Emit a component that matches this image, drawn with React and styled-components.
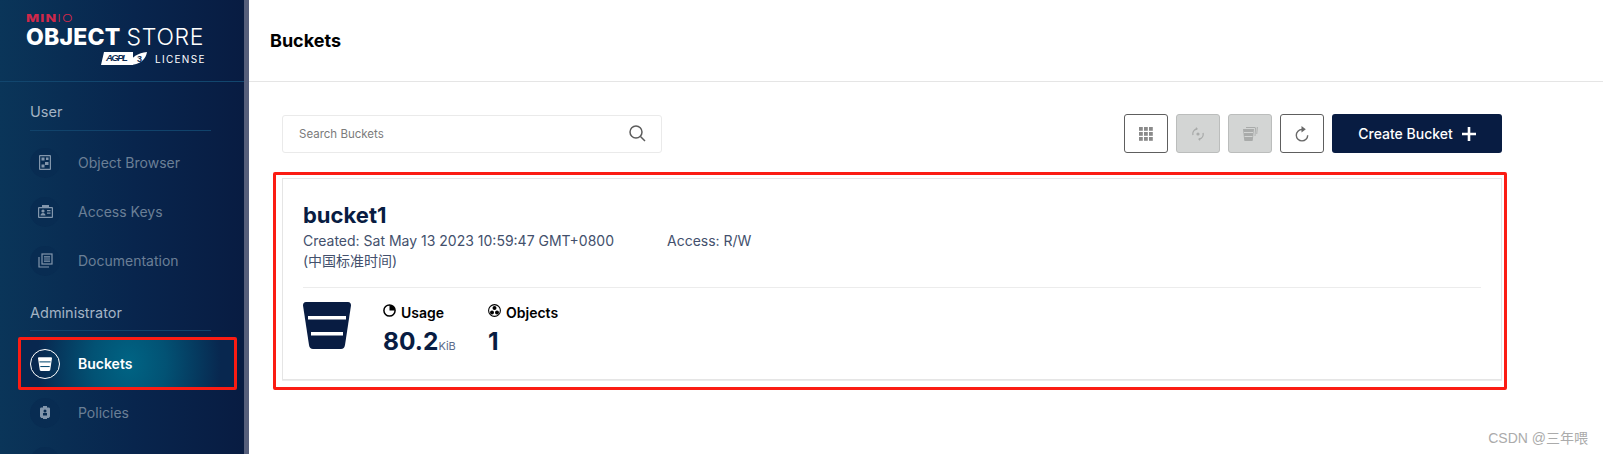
import React from 'react'
import styled, { createGlobalStyle } from 'styled-components'

const GlobalStyle = createGlobalStyle`
    html, body {
        margin: 0;
        padding: 0;
        background: #fff;
        font-family: Inter, "Noto Sans CJK SC", sans-serif;
    }
    * {
        box-sizing: border-box;
    }
`

const Page = styled.div`
    display: flex;
    width: 1603px;
    height: 454px;
    overflow: hidden;
    position: relative;
`

const Sidebar = styled.aside`
    width: 244px;
    flex: none;
    background: linear-gradient(90deg, #0a3559 0%, #08254d 55%, #081c42 100%);
    overflow: hidden;
`

const Handle = styled.div`
    width: 5px;
    flex: none;
    background: #565f7b;
`

const LogoBlock = styled.div`
    height: 82px;
    border-bottom: 1px solid #12466e;
    padding: 13px 0 0 26px;
`

const MinioMark = styled.div`
    font-size: 10px;
    line-height: 11px;
    font-weight: 800;
    letter-spacing: 0.8px;
    color: #d0284a;
    transform: scaleX(1.4);
    transform-origin: left;
    span {
        font-weight: 300;
    }
`

const ProductName = styled.div`
    font-size: 23px;
    line-height: 26px;
    font-weight: 800;
    color: #fff;
    white-space: nowrap;
    letter-spacing: 0.2px;
    span {
        font-weight: 300;
        margin-left: 6px;
        letter-spacing: 0.7px;
    }
`

const LicenseRow = styled.div`
    display: flex;
    align-items: center;
    gap: 8px;
    margin: 1px 0 0 75px;
    color: #fff;
    font-size: 10px;
    letter-spacing: 1.3px;
`

const NavSection = styled.nav`
    padding: 0 0 0 30px;
`

const SectionTitle = styled.div`
    width: 181px;
    height: ${(p) => p.$height}px;
    padding-top: ${(p) => p.$top}px;
    margin-bottom: ${(p) => p.$gap}px;
    border-bottom: 1px solid #11436b;
    color: #a3b3c4;
    font-size: 14.5px;
    line-height: 18px;
`

const NavItem = styled.div`
    display: flex;
    align-items: center;
    gap: 18px;
    height: 49px;
    color: ${(p) => (p.$active ? '#fff' : '#6b7f96')};
    font-size: 14px;
    font-weight: ${(p) => (p.$active ? 600 : 400)};
    position: relative;
    ${(p) =>
        p.$active &&
        `
        &::before {
            content: '';
            position: absolute;
            left: -9px;
            right: 10px;
            top: 1px;
            bottom: 1px;
            background: radial-gradient(ellipse 92px 120px at 108px 50%, #006484 0%, #025274 40%, #08274f 100%);
        }
        &::after {
            content: '';
            position: absolute;
            left: -12px;
            right: 7px;
            top: -2px;
            bottom: -2px;
            border: 3px solid #fb1c13;
            border-radius: 2px;
        }
    `}
`

const NavIcon = styled.span`
    width: 30px;
    height: 30px;
    flex: none;
    border-radius: 50%;
    display: flex;
    align-items: center;
    justify-content: center;
    position: relative;
    z-index: 1;
    background: ${(p) => (p.$active ? 'transparent' : '#082c52')};
    border: ${(p) => (p.$active ? '1px solid #fff' : 'none')};
    color: ${(p) => (p.$active ? '#fff' : '#8296ac')};
`

const ActiveGlyph = styled.span`
    --gap: #04486f;
    display: flex;
`

const NavLabel = styled.span`
    position: relative;
    z-index: 1;
`

const Main = styled.main`
    flex: 1;
    min-width: 0;
    background: #fff;
`

const Header = styled.header`
    height: 82px;
    border-bottom: 1px solid #e5e5e5;
    padding: 0 0 0 21px;
    display: flex;
    align-items: center;
`

const Title = styled.h1`
    margin: 0;
    font-size: 18px;
    line-height: 20px;
    font-weight: 700;
    color: #000;
`

const Toolbar = styled.div`
    display: flex;
    align-items: center;
    justify-content: space-between;
    padding: 32px 101px 0 33px;
`

const SearchBox = styled.div`
    width: 380px;
    height: 38px;
    border: 1px solid #eaeaea;
    border-radius: 3px;
    display: flex;
    align-items: center;
    justify-content: space-between;
    padding: 0 15px 0 16px;
    font-size: 11.5px;
    color: #7b7b7b;
`

const Actions = styled.div`
    display: flex;
    gap: 8px;
`

const IconButton = styled.button`
    width: 44px;
    height: 39px;
    padding: 0;
    display: flex;
    align-items: center;
    justify-content: center;
    border-radius: 3px;
    background: ${(p) => (p.disabled ? '#d3d5d4' : '#fff')};
    border: 1px solid ${(p) => (p.disabled ? '#bbbdbc' : '#5e5e5e')};
    color: ${(p) => (p.disabled ? '#a9abaa' : '#696969')};
`

const CreateButton = styled.button`
    width: 170px;
    height: 39px;
    display: flex;
    align-items: center;
    justify-content: center;
    gap: 9px;
    border: none;
    border-radius: 3px;
    background: #081c42;
    color: #fff;
    font-family: Inter, sans-serif;
    font-size: 14px;
    font-weight: 500;
`

const Card = styled.section`
    position: relative;
    margin: 25px 101px 0 33px;
    height: 202px;
    border: 1px solid #e5e5e5;
    box-shadow: 0 1px 0 #ececec;
    padding: 23px 20px 0 20px;
    &::after {
        content: '';
        position: absolute;
        left: -10px;
        right: -6px;
        top: -7px;
        bottom: -11px;
        border: 3px solid #fb1c13;
        border-radius: 2px;
        pointer-events: none;
    }
`

const BucketName = styled.h2`
    margin: 0;
    font-size: 22px;
    line-height: 26px;
    font-weight: 700;
    color: #081c42;
`

const MetaRow = styled.div`
    display: flex;
    margin-top: 3px;
    color: #43506c;
    font-size: 14px;
    line-height: 20px;
    height: 56px;
`

const Created = styled.div`
    width: 364px;
    flex: none;
    padding-right: 30px;
`

const Divider = styled.div`
    height: 1px;
    background: #ececec;
    width: 1178px;
`

const StatsRow = styled.div`
    display: flex;
    align-items: flex-start;
    padding-top: 15px;
`

const BigBucket = styled.div`
    width: 80px;
    flex: none;
    display: flex;
    margin-top: -2px;
    color: #081c42;
`

const Stat = styled.div`
    width: ${(p) => p.$width}px;
    flex: none;
`

const StatLabel = styled.div`
    display: flex;
    align-items: center;
    gap: 5px;
    height: 18px;
    font-size: 14px;
    font-weight: 600;
    color: #000;
    svg {
        margin-top: -3px;
    }
`

const StatValue = styled.div`
    margin-top: 4px;
    font-size: 24.500px;
    line-height: 32px;
    font-weight: 700;
    color: #081c42;
    small {
        font-size: 11px;
        font-weight: 400;
        color: #5a6b8c;
        margin-left: 0;
    }
`

const Watermark = styled.div`
    position: absolute;
    right: 15px;
    bottom: 7px;
    font-family: "Liberation Sans", "Noto Sans CJK SC", sans-serif;
    font-size: 14px;
    line-height: 18px;
    color: #ababab;
`

const BucketGlyph = ({ size = 14 }) => (
    <svg width={size} height={size} viewBox="0 0 48 48" fill="currentColor">
        <path d="M3 1h42c2 0 3 1.500 3 3.500L42 44c-.4 2.500-1.800 4-4 4H10c-2.200 0-3.600-1.500-4-4L0 4.500C0 2.500 1 1 3 1z" />
        <rect x="5" y="15" width="38" height="3.500" fill="var(--gap, #fff)" />
        <rect x="8" y="31" width="32" height="3.500" fill="var(--gap, #fff)" />
    </svg>
)

const icons = {
    browser: (
        <svg width="12" height="15" viewBox="0 0 12 15" fill="currentColor">
            <path d="M1 0h10a1 1 0 0 1 1 1v13a1 1 0 0 1-1 1H1a1 1 0 0 1-1-1V1a1 1 0 0 1 1-1zm.2 1.200v12.600h9.600V1.200z" />
            <rect x="2.500" y="2.500" width="3" height="3" />
            <rect x="7" y="2.500" width="2.500" height="2.500" />
            <rect x="6" y="7" width="3.500" height="3" />
            <rect x="2.500" y="9.500" width="3" height="3" />
        </svg>
    ),
    keys: (
        <svg width="15" height="13" viewBox="0 0 15 13" fill="currentColor">
            <path d="M4 0h7v2H4zM1 2h13a1 1 0 0 1 1 1v9a1 1 0 0 1-1 1H1a1 1 0 0 1-1-1V3a1 1 0 0 1 1-1zm.2 1.200v8.600h12.600V3.200z" />
            <circle cx="5" cy="6" r="1.600" />
            <path d="M2.500 10.500c0-1.500 1.100-2.500 2.500-2.500s2.500 1 2.500 2.500zM9 5h3.500v1.200H9zM9 7.500h3.500v1.200H9z" />
        </svg>
    ),
    docs: (
        <svg width="15" height="15" viewBox="0 0 15 15" fill="none" stroke="currentColor" strokeWidth="1.200">
            <rect x="4" y="1" width="10" height="10" />
            <path d="M1 4v10h10M6 3.800h6M6 6h6M6 8.200h6" />
        </svg>
    ),
    policies: (
        <svg width="10" height="13" viewBox="0 0 10 13" fill="currentColor">
            <path d="M3 0h4v1.400h2.200L10 2.500v8L8.800 12H7v1H3v-1H1.200L0 10.500v-8l.8-1.100H3z" />
            <circle cx="5" cy="5" r="1.500" fill="#082c52" />
            <rect x="3" y="7" width="4" height="2.500" fill="#082c52" />
        </svg>
    ),
    more: (
        <svg width="12" height="12" viewBox="0 0 12 12" fill="currentColor">
            <circle cx="6" cy="6" r="5" />
        </svg>
    ),
}

const GridIcon = () => (
    <svg width="14" height="14" viewBox="0 0 14 14" fill="#8a8a8a">
        {[0, 5, 10].map((y) =>
            [0, 5, 10].map((x) => <rect key={`${x}-${y}`} x={x} y={y} width="3.800" height="3.800" />)
        )}
    </svg>
)

const SyncIcon = () => (
    <svg width="12" height="14" viewBox="0 0 12 14" fill="none" stroke="currentColor" strokeWidth="1.300">
        <path d="M1 8A5 5 0 0 1 4.500 2M11 6a5 5 0 0 1-3.500 6" />
        <path d="M4 0l2 2-2.500 1.500zM8 14l-2-2 2.500-1.500z" fill="currentColor" stroke="none" />
        <circle cx="6" cy="7" r="1.600" fill="currentColor" stroke="none" />
    </svg>
)

const StackIcon = () => (
    <svg width="15" height="14" viewBox="0 0 15 14" fill="currentColor">
        <path d="M0 2h11l-1.200 11c0 .6-.4 1-1 1H2.200c-.6 0-1-.4-1-1z" />
        <rect x="1" y="5" width="9" height="1" fill="#d3d5d4" />
        <rect x="1.500" y="9" width="8" height="1" fill="#d3d5d4" />
        <path d="M3 0h9.500v1H3zM12 1h1l-.6 8h-.8zM13.800 0h1l-.6 7h-.8z" />
    </svg>
)

const RefreshIcon = () => (
    <svg width="14" height="16" viewBox="0 0 14 16" fill="none" stroke="currentColor" strokeWidth="1.400">
        <path d="M7 3.500A5.700 5.700 0 1 0 12.700 9.200" />
        <path d="M6.500 0v6.500l4.300-3.200z" fill="currentColor" stroke="none" />
    </svg>
)

const SearchIcon = () => (
    <svg width="17" height="17" viewBox="0 0 17 17" fill="none" stroke="#5c5c5c" strokeWidth="1.500">
        <circle cx="7" cy="7" r="6" />
        <path d="M11.500 11.500L16 16" />
    </svg>
)

const PieIcon = () => (
    <svg width="13" height="13" viewBox="0 0 13 13" fill="none">
        <circle cx="6.500" cy="6.500" r="5.600" stroke="#000" strokeWidth="1.500" />
        <path d="M6.500 1v5.500H12A5.500 5.500 0 0 0 6.500 1z" fill="#000" />
    </svg>
)

const ObjectsIcon = () => (
    <svg width="13" height="13" viewBox="0 0 13 13" fill="#000">
        <circle cx="6.500" cy="6.500" r="5.900" fill="none" stroke="#000" strokeWidth="1.100" />
        <circle cx="6.500" cy="4.100" r="2" />
        <circle cx="4" cy="8.400" r="2" />
        <circle cx="9" cy="8.400" r="2" />
    </svg>
)

const LicenseBadge = () => (
    <svg width="46" height="15" viewBox="0 0 46 15">
        <path d="M3 1h29v13H0z" fill="#fff" />
        <text x="5" y="10" fontFamily="Liberation Sans, sans-serif" fontSize="9.500" fontStyle="italic" fontWeight="700" fill="#0a2a52" textLength="23">
            AGPL
        </text>
        <path d="M28 13C30 6 37 2 46 1c-1 7-7 13-18 13z" fill="#fff" />
        <text x="36" y="10.500" fontFamily="Liberation Sans, sans-serif" fontSize="9" fontWeight="700" fill="#0a2a52">
            3
        </text>
    </svg>
)

const userItems = [
    { label: 'Object Browser', icon: icons.browser },
    { label: 'Access Keys', icon: icons.keys },
    { label: 'Documentation', icon: icons.docs },
]

const adminItems = [
    { label: 'Buckets', active: true },
    { label: 'Policies', icon: icons.policies },
    { label: '', icon: icons.more },
]

export default function App() {
    return (
        <Page>
            <GlobalStyle />
            <Sidebar>
                <LogoBlock>
                    <MinioMark>
                        MIN<span>IO</span>
                    </MinioMark>
                    <ProductName>
                        OBJECT<span>STORE</span>
                    </ProductName>
                    <LicenseRow>
                        <LicenseBadge />
                        LICENSE
                    </LicenseRow>
                </LogoBlock>
                <NavSection>
                    <SectionTitle $height={49} $top={21} $gap={7}>User</SectionTitle>
                    {userItems.map((item) => (
                        <NavItem key={item.label}>
                            <NavIcon>{item.icon}</NavIcon>
                            <NavLabel>{item.label}</NavLabel>
                        </NavItem>
                    ))}
                    <SectionTitle $height={46} $top={19} $gap={8}>Administrator</SectionTitle>
                    {adminItems.map((item) => (
                        <NavItem key={item.label} $active={item.active}>
                            <NavIcon $active={item.active}>
                                {item.active ? (
                                    <ActiveGlyph>
                                        <BucketGlyph />
                                    </ActiveGlyph>
                                ) : (
                                    item.icon
                                )}
                            </NavIcon>
                            <NavLabel>{item.label}</NavLabel>
                        </NavItem>
                    ))}
                </NavSection>
            </Sidebar>
            <Handle />
            <Main>
                <Header>
                    <Title>Buckets</Title>
                </Header>
                <Toolbar>
                    <SearchBox>
                        Search Buckets
                        <SearchIcon />
                    </SearchBox>
                    <Actions>
                        <IconButton><GridIcon /></IconButton>
                        <IconButton disabled><SyncIcon /></IconButton>
                        <IconButton disabled><StackIcon /></IconButton>
                        <IconButton><RefreshIcon /></IconButton>
                        <CreateButton>
                            Create Bucket
                            <svg width="14" height="14" viewBox="0 0 14 14" fill="#fff">
                                <path d="M5.700 0h2.600v5.700H14v2.600H8.300V14H5.700V8.300H0V5.700h5.700z" />
                            </svg>
                        </CreateButton>
                    </Actions>
                </Toolbar>
                <Card>
                    <BucketName>bucket1</BucketName>
                    <MetaRow>
                        <Created>Created: Sat May 13 2023 10:59:47 GMT+0800 (中国标准时间)</Created>
                        <div>Access: R/W</div>
                    </MetaRow>
                    <Divider />
                    <StatsRow>
                        <BigBucket>
                            <BucketGlyph size={48} />
                        </BigBucket>
                        <Stat $width={105}>
                            <StatLabel><PieIcon />Usage</StatLabel>
                            <StatValue>80.2<small>KiB</small></StatValue>
                        </Stat>
                        <Stat $width={100}>
                            <StatLabel><ObjectsIcon />Objects</StatLabel>
                            <StatValue>1</StatValue>
                        </Stat>
                    </StatsRow>
                </Card>
            </Main>
            <Watermark>CSDN @三年喂</Watermark>
        </Page>
    )
}
